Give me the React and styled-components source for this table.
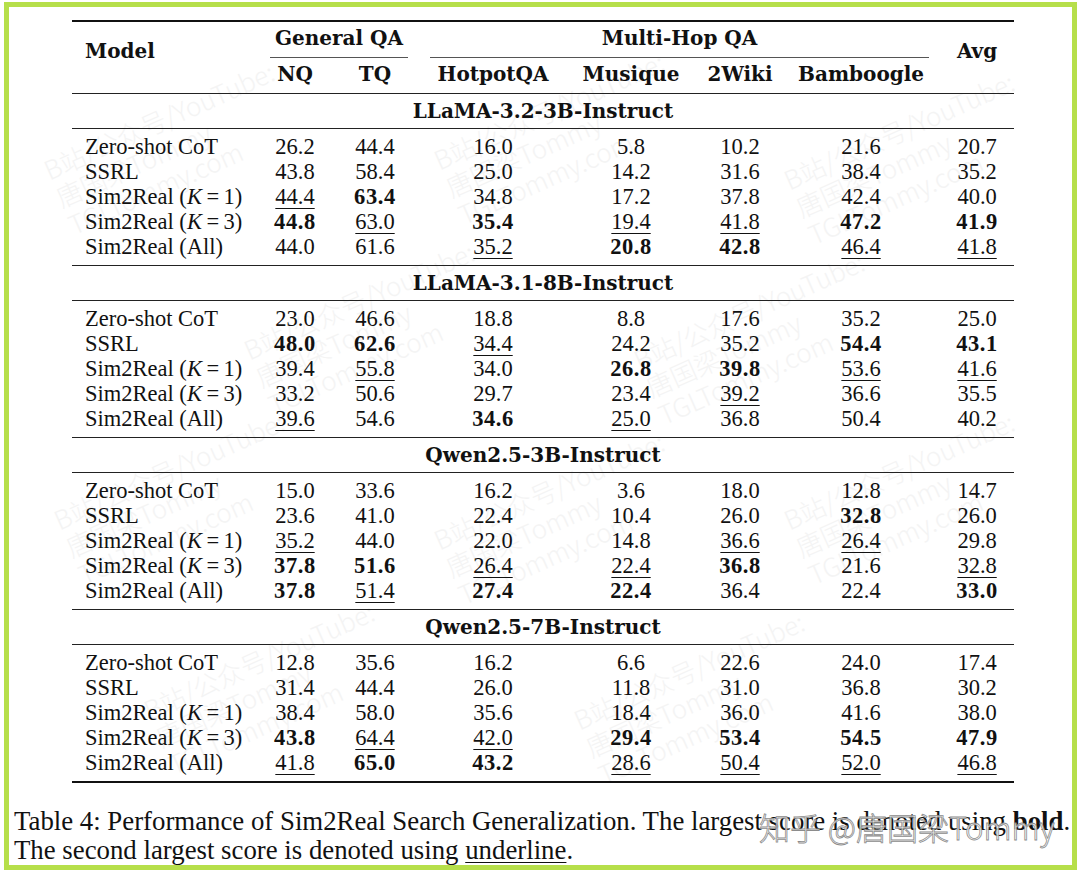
import React from "react";
import styled, { createGlobalStyle } from "styled-components";

const GlobalStyle = createGlobalStyle`
  html, body {
    margin: 0;
    padding: 0;
    background: #ffffff;
  }
`;

const groups = [
  {
    title: "LLaMA-3.2-3B-Instruct",
    rows: [
      ["26.2", "44.4", "16.0", "5.8", "10.2", "21.6", "20.7"],
      ["43.8", "58.4", "25.0", "14.2", "31.6", "38.4", "35.2"],
      ["u44.4", "b63.4", "34.8", "17.2", "37.8", "42.4", "40.0"],
      ["b44.8", "u63.0", "b35.4", "u19.4", "u41.8", "b47.2", "b41.9"],
      ["44.0", "61.6", "u35.2", "b20.8", "b42.8", "u46.4", "u41.8"],
    ],
  },
  {
    title: "LLaMA-3.1-8B-Instruct",
    rows: [
      ["23.0", "46.6", "18.8", "8.8", "17.6", "35.2", "25.0"],
      ["b48.0", "b62.6", "u34.4", "24.2", "35.2", "b54.4", "b43.1"],
      ["39.4", "u55.8", "34.0", "b26.8", "b39.8", "u53.6", "u41.6"],
      ["33.2", "50.6", "29.7", "23.4", "u39.2", "36.6", "35.5"],
      ["u39.6", "54.6", "b34.6", "u25.0", "36.8", "50.4", "40.2"],
    ],
  },
  {
    title: "Qwen2.5-3B-Instruct",
    rows: [
      ["15.0", "33.6", "16.2", "3.6", "18.0", "12.8", "14.7"],
      ["23.6", "41.0", "22.4", "10.4", "26.0", "b32.8", "26.0"],
      ["u35.2", "44.0", "22.0", "14.8", "u36.6", "u26.4", "29.8"],
      ["b37.8", "b51.6", "u26.4", "u22.4", "b36.8", "21.6", "u32.8"],
      ["b37.8", "u51.4", "b27.4", "b22.4", "36.4", "22.4", "b33.0"],
    ],
  },
  {
    title: "Qwen2.5-7B-Instruct",
    rows: [
      ["12.8", "35.6", "16.2", "6.6", "22.6", "24.0", "17.4"],
      ["31.4", "44.4", "26.0", "11.8", "31.0", "36.8", "30.2"],
      ["38.4", "58.0", "35.6", "18.4", "36.0", "41.6", "38.0"],
      ["b43.8", "u64.4", "u42.0", "b29.4", "b53.4", "b54.5", "b47.9"],
      ["u41.8", "b65.0", "b43.2", "u28.6", "u50.4", "u52.0", "u46.8"],
    ],
  },
];

const colWidths = [190, 66, 94, 142, 134, 84, 158, 74];

// faint diagonal watermark blocks behind the table
const watermarks = [
  [30, 150], [420, 140], [770, 160], [230, 330], [620, 340],
  [40, 500], [770, 500], [420, 520], [130, 690], [560, 700],
];

const Page = styled.div`
  width: 1080px;
  height: 877px;
  padding: 2px 0 0 4px;
  box-sizing: border-box;
`;

const Frame = styled.div`
  position: relative;
  overflow: hidden;
  width: 1073px;
  height: 868px;
  box-sizing: border-box;
  border: 5px solid #b6df4a;
  padding: 13px 0 0 5px;
  background: #ffffff;
`;

const Content = styled.div`
  position: relative;
  z-index: 1;
`;

const Mark = styled.div`
  position: absolute;
  z-index: 0;
  transform: rotate(-24deg);
  transform-origin: left top;
  font-family: "Noto Sans CJK SC", "Noto Sans", sans-serif;
  font-size: 26px;
  line-height: 30px;
  font-weight: 300;
  color: #f4f4f4;
  white-space: nowrap;
`;

const Table = styled.table`
  margin-left: 58px;
  width: 942px;
  table-layout: fixed;
  border-collapse: collapse;
  border-top: 2px solid #111;
  border-bottom: 2px solid #111;
  color: #111;
`;

const HeadCell = styled.th`
  padding: 0;
  font-family: "DejaVu Serif", "Liberation Serif", serif;
  font-weight: 700;
  font-size: 20px;
  line-height: 24px;
  text-align: ${(p) => (p.$left ? "left" : "center")};
  padding-left: ${(p) => (p.$left ? "13px" : "0")};
  white-space: nowrap;
`;

const SpanCell = styled(HeadCell)`
  vertical-align: top;
  padding-top: 4px;
`;

const SideCell = styled(HeadCell)`
  vertical-align: middle;
  padding-bottom: 13px;
`;

const GroupRule = styled.div`
  margin: ${(p) => p.$margin};
  padding-bottom: 7px;
  border-bottom: 1px solid #555;
`;

const SubRow = styled.tr`
  height: 35px;
  border-bottom: 1px solid #222;
  & > th {
    padding-bottom: 3px;
  }
`;

const TitleRow = styled.tr`
  height: 35px;
  border-bottom: 1px solid #222;
`;

const DataRow = styled.tr`
  border-bottom: ${(p) => (p.$last ? "1px solid #222" : "none")};
  & > td {
    padding-top: ${(p) => (p.$first ? "5px" : "0")};
    padding-bottom: ${(p) => (p.$last ? "6px" : "0")};
  }
`;

const Label = styled.td`
  padding-left: 13px;
  font-family: "Liberation Serif", "Times New Roman", serif;
  font-size: 22.5px;
  line-height: 25px;
  white-space: nowrap;
`;

const Num = styled.td`
  text-align: center;
  font-family: "Liberation Serif", "Times New Roman", serif;
  font-size: 22.5px;
  line-height: 25px;
  font-weight: ${(p) => (p.$bold ? 700 : 400)};
  letter-spacing: ${(p) => (p.$bold ? "0.6px" : "0")};
  text-decoration: ${(p) => (p.$under ? "underline" : "none")};
  text-decoration-thickness: 1px;
  text-underline-offset: 4px;
`;

const Var = styled.i`
  font-style: italic;
`;

const Caption = styled.p`
  margin: 24px 0 0;
  font-family: "Liberation Serif", "Times New Roman", serif;
  font-size: 26.8px;
  line-height: 29px;
  color: #111;
  white-space: nowrap;
`;

const Under = styled.span`
  text-decoration: underline;
  text-decoration-thickness: 1px;
  text-underline-offset: 3px;
`;

const Stamp = styled.div`
  position: absolute;
  z-index: 2;
  left: 750px;
  top: 800px;
  font-family: "Noto Sans CJK SC", "Noto Sans", sans-serif;
  font-size: 31px;
  line-height: 40px;
  font-weight: 300;
  color: rgba(255, 255, 255, 0.85);
  -webkit-text-stroke: 0.8px #8c8c8c;
  white-space: nowrap;
`;

const labels = [
  "Zero-shot CoT",
  "SSRL",
  <>Sim2Real (<Var>K</Var>{"\u2009=\u2009"}1)</>,
  <>Sim2Real (<Var>K</Var>{"\u2009=\u2009"}3)</>,
  "Sim2Real (All)",
];

const Value = ({ v }) => {
  const bold = v[0] === "b";
  const under = v[0] === "u";
  const text = bold || under ? v.slice(1) : v;
  return (
    <Num $bold={bold} $under={under}>
      {text}
    </Num>
  );
};

const App = () => {
  return (
    <Page>
      <GlobalStyle />
      <Frame>
        {watermarks.map(([x, y], i) => (
          <Mark key={i} style={{ left: x, top: y }}>
            B站/公众号/YouTube:
            <br />
            唐国梁Tommy
            <br />
            TGLTommy.com
          </Mark>
        ))}
        <Content>
          <Table>
            <colgroup>
              {colWidths.map((w, i) => (
                <col key={i} style={{ width: w }} />
              ))}
            </colgroup>
            <thead>
              <tr>
                <SideCell rowSpan={2} $left>
                  Model
                </SideCell>
                <SpanCell colSpan={2}>
                  <GroupRule $margin="0 14px 0 8px">General QA</GroupRule>
                </SpanCell>
                <SpanCell colSpan={4}>
                  <GroupRule $margin="0 11px 0 8px">Multi-Hop QA</GroupRule>
                </SpanCell>
                <SideCell rowSpan={2}>Avg</SideCell>
              </tr>
              <SubRow>
                <HeadCell>NQ</HeadCell>
                <HeadCell>TQ</HeadCell>
                <HeadCell>HotpotQA</HeadCell>
                <HeadCell>Musique</HeadCell>
                <HeadCell>2Wiki</HeadCell>
                <HeadCell>Bamboogle</HeadCell>
              </SubRow>
            </thead>
            {groups.map((g) => (
              <tbody key={g.title}>
                <TitleRow>
                  <HeadCell colSpan={8}>{g.title}</HeadCell>
                </TitleRow>
                {g.rows.map((row, r) => (
                  <DataRow
                    key={r}
                    $first={r === 0}
                    $last={r === g.rows.length - 1}
                  >
                    <Label>{labels[r]}</Label>
                    {row.map((v, c) => (
                      <Value key={c} v={v} />
                    ))}
                  </DataRow>
                ))}
              </tbody>
            ))}
          </Table>
          <Caption>
            Table 4: Performance of Sim2Real Search Generalization. The largest
            score is denoted using <b>bold</b>.
            <br />
            The second largest score is denoted using <Under>underline</Under>.
          </Caption>
        </Content>
        <Stamp>知乎 @唐国梁Tommy</Stamp>
      </Frame>
    </Page>
  );
};

export default App;
